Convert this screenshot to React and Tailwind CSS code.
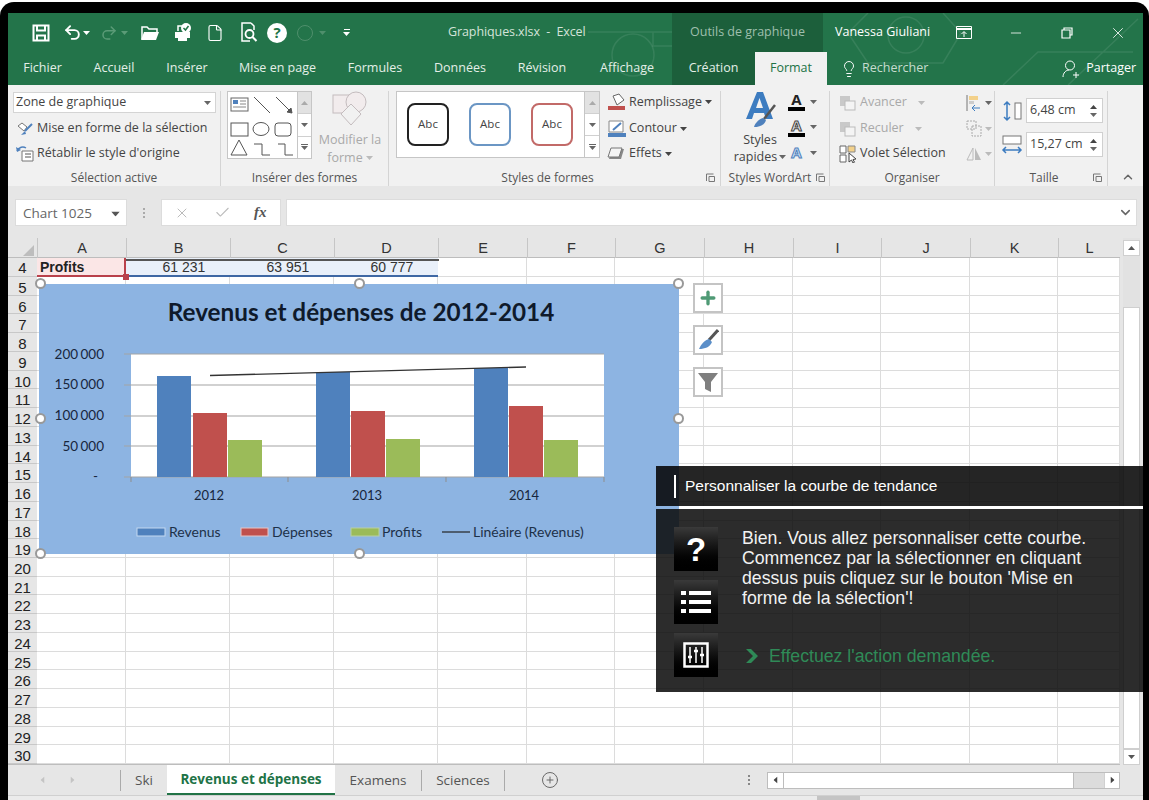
import React from "react";
import {
  Redo2,
  Undo2,
  File,
  Lightbulb,
  ChevronUp,
  ChevronDown,
  Minus,
  X,
  Check,
  CirclePlus,
  Plus,
} from "lucide-react";

const tabs = [
  ["Fichier", "w-[69px]"],
  ["Accueil", "w-[74px]"],
  ["Insérer", "w-[72px]"],
  ["Mise en page", "w-[109px]"],
  ["Formules", "w-[86px]"],
  ["Données", "w-[84px]"],
  ["Révision", "w-[80px]"],
  ["Affichage", "w-[90px]"],
];

const columns = ["A", "B", "C", "D", "E", "F", "G", "H", "I", "J", "K", "L"];
const rows = Array.from({ length: 26 }, (_, i) => i + 5);
const gridCols =
  "grid grid-cols-[29px_89px_104px_104px_104px_89px_88px_89px_89px_88px_89px_88px_62px]";

const Caret = ({ className = "text-[#666]" }) => (
  <svg width="7" height="4" viewBox="0 0 7 4" className={`shrink-0 ${className}`}>
    <path d="M0 0h7L3.5 4z" fill="currentColor" />
  </svg>
);

const Launcher = () => (
  <svg width="9" height="9" viewBox="0 0 9 9" className="shrink-0">
    <path d="M.5 8V1h7M3 3.5h5.5V8.500H3z" fill="none" stroke="#777" />
  </svg>
);

const Group = ({ width, label, launcher, labelClass = "", children }) => (
  <div className={`${width} flex flex-col border-r border-[#d4d4d4] h-[95px]`}>
    <div className="h-[78px] flex">{children}</div>
    <div className={`h-[17px] flex items-center text-[12px] text-[#555] ${labelClass}`}>
      <span className="flex-1 text-center">{label}</span>
      {launcher && <Launcher />}
    </div>
  </div>
);

const Handle = ({ className }) => (
  <div className={`absolute w-[11px] h-[11px] rounded-full bg-white border-2 border-[#999] ${className}`} />
);

const FloatButton = ({ children }) => (
  <div className="w-[30px] h-[30px] bg-white border-2 border-[#c4c4c4] flex items-center justify-center">
    {children}
  </div>
);

const HelpButton = ({ children }) => (
  <div className="w-[44px] h-[44px] bg-gradient-to-b from-[#3a3a3a] to-black flex items-center justify-center">
    {children}
  </div>
);

const Abc = ({ color }) => (
  <div className={`w-[42px] h-[43px] rounded-[8px] border-2 bg-white text-[11.500px] text-[#444] text-center pt-[10px] ${color}`}>
    Abc
  </div>
);

const ScrollStack = ({ height, className = "" }) => (
  <div className={`w-[15px] ${height} flex flex-col bg-white border-l border-[#c6c6c6] ${className}`}>
    <div className="flex-1 bg-[#e2e2e2] flex items-center justify-center">
      <Caret className="rotate-180 text-[#aaa]" />
    </div>
    <div className="flex-1 border-y border-[#d0d0d0] flex items-center justify-center">
      <Caret />
    </div>
    <div className="flex-1 flex flex-col items-center justify-center gap-[1px]">
      <div className="w-[7px] h-px bg-[#666]" />
      <Caret />
    </div>
  </div>
);

const Chart = () => (
  <svg viewBox="39 284 640 270" className="absolute left-[39px] top-[284px] w-[640px] h-[270px] font-['Lato',sans-serif]">
    <rect x="39" y="284" width="640" height="270" fill="#8db4e2" />
    <text x="361" y="321" textAnchor="middle" fontSize="24.300" fontWeight="700" fill="#0f1a2b">
      Revenus et dépenses de 2012-2014
    </text>
    <rect x="131" y="354" width="473" height="123" fill="#fff" />
    {[354, 385, 416, 446, 477].map((y) => (
      <line key={y} x1="124" x2="604" y1={y} y2={y} stroke="#a3a3a3" strokeWidth="1.200" />
    ))}
    {[
      [157, 376, "#4f81bd"],
      [193, 413, "#c0504d"],
      [228, 440, "#9bbb59"],
      [316, 372, "#4f81bd"],
      [351, 411, "#c0504d"],
      [386, 439, "#9bbb59"],
      [474, 368, "#4f81bd"],
      [509, 406, "#c0504d"],
      [544, 440, "#9bbb59"],
    ].map(([x, y, fill]) => (
      <rect key={x} x={x} y={y} width="34" height={477 - y} fill={fill} />
    ))}
    <line x1="210" y1="375.500" x2="526" y2="367" stroke="#333" strokeWidth="1.300" />
    {[131, 288, 446, 604].map((x) => (
      <line key={x} x1={x} x2={x} y1="477" y2="482" stroke="#8d8d8d" />
    ))}
    <g fontSize="13.500" fill="#17263c" textAnchor="end" wordSpacing="-1">
      <text x="104" y="359">200 000</text>
      <text x="104" y="389">150 000</text>
      <text x="104" y="420">100 000</text>
      <text x="104" y="451">50 000</text>
      <text x="98" y="481">-</text>
    </g>
    <g fontSize="13" fill="#17263c" textAnchor="middle">
      <text x="209" y="500">2012</text>
      <text x="367" y="500">2013</text>
      <text x="524" y="500">2014</text>
    </g>
    <g fontSize="14" fill="#1d3149">
      <rect x="137" y="528" width="28" height="8" fill="#4f81bd" stroke="#c4d8f0" />
      <text x="169" y="537">Revenus</text>
      <rect x="241" y="528" width="27" height="8" fill="#c0504d" stroke="#e6c6c8" />
      <text x="272" y="537">Dépenses</text>
      <rect x="351" y="528" width="28" height="8" fill="#9bbb59" stroke="#b9d0a4" />
      <text x="382" y="537">Profits</text>
      <line x1="442" x2="470" y1="532" y2="532" stroke="#222" strokeWidth="1.200" />
      <text x="473" y="537">Linéaire (Revenus)</text>
    </g>
  </svg>
);

const TitleBar = () => (
  <div className="h-[39px] flex items-center text-[12.5px] text-[#d3e3d9]">
    <div className="w-[440px] h-full relative flex items-center text-white">
      <svg width="18" height="18" viewBox="0 0 18 18" className="ml-[24px]">
        <path d="M1.500 1.500h15v15h-15z" fill="none" stroke="#fff" strokeWidth="2" />
        <path d="M5 1.500v5h8v-5M5 16.500v-5h8v5" fill="none" stroke="#fff" strokeWidth="2" />
      </svg>
      <Undo2 size={19} strokeWidth={2.4} className="ml-[13px]" />
      <Caret className="ml-[1px] text-white" />
      <Redo2 size={18} strokeWidth={2} className="ml-[10px] text-[#5b9b77]" />
      <Caret className="ml-[3px] text-[#5b9b77]" />
      <svg width="20" height="18" viewBox="0 0 20 18" className="ml-[12px]">
        <path d="M2 15V3h5l2 2h8v3" fill="none" stroke="#fff" strokeWidth="1.500" />
        <path d="M1 16l3-8h15l-3 8z" fill="#fff" />
      </svg>
      <svg width="21" height="21" viewBox="0 0 21 21" className="ml-[12px]">
        <path d="M3 10h15v6h-3v3H6v-3H3z" fill="#fff" />
        <path d="M6 9V4h9v5" fill="none" stroke="#fff" strokeWidth="1.500" />
        <circle cx="14" cy="6" r="5" fill="#fff" />
        <path d="M11.500 6l2 2 3-4" fill="none" stroke="#217346" strokeWidth="1.500" />
      </svg>
      <File size={18} strokeWidth={1.500} className="ml-[13px]" />
      <svg width="20" height="21" viewBox="0 0 20 21" className="ml-[15px]">
        <path d="M12 1H3v18h8M12 1l3 3v4" fill="none" stroke="#fff" strokeWidth="1.500" />
        <circle cx="10.500" cy="12" r="4" fill="none" stroke="#fff" strokeWidth="1.800" />
        <path d="M13.500 15l4 4" stroke="#fff" strokeWidth="2" />
      </svg>
      <div className="ml-[8px] w-[20px] h-[20px] rounded-full bg-white text-[#217346] text-[15px] font-bold flex items-center justify-center">?</div>
      <div className="ml-[10px] w-[16px] h-[16px] rounded-full border border-[#4f8f6c]" />
      <Caret className="ml-[6px] text-[#4f8f6c]" />
      <div className="ml-[17px] flex flex-col items-center gap-[2px]">
        <div className="w-[6px] h-px bg-white" />
        <Caret className="text-white" />
      </div>
    </div>
    <div className="w-[224px] tracking-[-0.1px]">Graphiques.xlsx&nbsp; -&nbsp; Excel</div>
    <div className="w-[151px] h-full bg-[#1c5f3b] flex items-center pl-[18px] text-[#9fbfad]">
      Outils de graphique
    </div>
    <div className="pl-[12px] w-[133px] text-white whitespace-nowrap">Vanessa Giuliani</div>
    <svg width="16" height="13" viewBox="0 0 16 13">
      <path d="M.5.500h15v12H.5z" fill="none" stroke="#fff" />
      <path d="M1 3h14" stroke="#fff" strokeWidth="2" />
      <path d="M8 11V6M5.500 8L8 5.500 10.500 8" fill="none" stroke="#fff" />
    </svg>
    <Minus size={16} strokeWidth={1.200} className="ml-[36px] text-white" />
    <svg width="12" height="12" viewBox="0 0 12 12" className="ml-[37px]">
      <path d="M3 3V1h8v7H9M1 3h8v8H1z" fill="none" stroke="#fff" strokeWidth="1.200" />
    </svg>
    <X size={18} strokeWidth={1.100} className="ml-[36px] text-white" />
  </div>
);

const TabBar = () => (
  <div className="h-[33px] flex items-center text-[12.5px] text-[#e4efe8]">
    {tabs.map(([name, width]) => (
      <div key={name} className={`${width} text-center`}>{name}</div>
    ))}
    <div className="w-[83px] h-full bg-[#1c5f3b] flex items-center justify-center">Création</div>
    <div className="w-[72px] h-full bg-[#f1f1f1] text-[#217346] flex items-center justify-center">Format</div>
    <Lightbulb size={18} strokeWidth={1.300} className="ml-[13px] text-white" />
    <span className="ml-[4px] text-[#c7dccf]">Rechercher</span>
    <svg width="20" height="20" viewBox="0 0 20 20" className="ml-[133px]">
      <circle cx="9" cy="6.500" r="4.500" fill="none" stroke="#fff" />
      <path d="M2 18c0-4 3-7 6-7M12 16h6M15 13v6" fill="none" stroke="#fff" />
    </svg>
    <span className="ml-[5px] text-white">Partager</span>
  </div>
);

const Ribbon = () => (
  <div className="h-[102px] bg-[#f1f1f1] flex pt-[6px] text-[12.5px] text-[#444]">
    <Group width="w-[213px]" label="Sélection active">
      <div className="pl-[5px] pt-px flex flex-col">
        <div className="w-[203px] h-[21px] bg-white border border-[#d4d4d4] flex items-center justify-between pl-[2px] pr-[4px]">
          <span>Zone de graphique</span>
          <Caret />
        </div>
        <div className="mt-[3px] h-[25px] flex items-center gap-[3px] pl-[3px]">
          <svg width="18" height="17" viewBox="0 0 18 17">
            <path d="M6 3l5 4-3 4-6-5z" fill="#fff" stroke="#777" />
            <path d="M16 4L9 11" stroke="#4f81bd" strokeWidth="2" />
            <path d="M9 11l-4 4 5-1z" fill="#4f81bd" />
          </svg>
          <span>Mise en forme de la sélection</span>
        </div>
        <div className="h-[25px] flex items-center gap-[3px] pl-[3px]">
          <svg width="18" height="17" viewBox="0 0 18 17">
            <path d="M6 6h11v10H6z" fill="#fff" stroke="#777" />
            <path d="M9 9h6M9 12h6" stroke="#555" />
            <path d="M1 6c2-4 6-5 9-3" fill="none" stroke="#4f81bd" strokeWidth="1.500" />
            <path d="M0 2l1 5 4-2z" fill="#4f81bd" />
          </svg>
          <span>Rétablir le style d'origine</span>
        </div>
      </div>
    </Group>

    <Group width="w-[168px]" label="Insérer des formes">
      <div className="pl-[6px] flex">
        <div className="w-[85px] h-[68px] bg-white border border-[#c6c6c6] flex">
          <svg width="69" height="66" viewBox="0 0 69 66" className="shrink-0">
            <g fill="none" stroke="#555">
              <rect x="3" y="6" width="17" height="13" stroke="#666" fill="#fff" />
              <rect x="5" y="8" width="5" height="4" fill="#4f81bd" stroke="none" />
              <path d="M12 9h6M12 12h6M5 15h13" stroke="#888" />
              <path d="M26 5l16 16M48 5l16 16" />
              <path d="M64 21l-5-1 4-4z" fill="#555" />
              <rect x="3" y="31" width="17" height="13" />
              <ellipse cx="33" cy="37" rx="8" ry="6.500" />
              <rect x="47" y="31" width="16" height="13" rx="3" />
              <path d="M11 48l-8 15h16zM26 52h8v11h8M50 52h7v11h8" />
            </g>
          </svg>
          <ScrollStack height="h-[66px]" />
        </div>
        <div className="w-[74px] ml-[1px] flex flex-col items-center text-[#a9a9a9] leading-[18px]">
          <svg width="38" height="36" viewBox="0 0 38 36" className="mb-[4px]">
            <g fill="#f2eced" stroke="#c4bcbe">
              <rect x="2" y="4" width="19" height="18" />
              <circle cx="25" cy="11" r="10" />
              <path d="M20 13l10 10-10 11-10-11z" fill="#f1f1f1" />
            </g>
          </svg>
          <span>Modifier la</span>
          <span className="flex items-center gap-[3px]">forme <Caret className="text-[#bbb]" /></span>
        </div>
      </div>
    </Group>

    <Group width="w-[332px]" label="Styles de formes" launcher labelClass="pr-[5px]">
      <div className="pl-[7px] flex">
        <div className="w-[204px] h-[67px] bg-white border border-[#c6c6c6] flex">
          <div className="flex-1 flex gap-[20px] pl-[10px] pt-[11px]">
            <Abc color="border-[#222]" />
            <Abc color="border-[#6b96c4]" />
            <Abc color="border-[#c26a68]" />
          </div>
          <ScrollStack height="h-[65px]" />
        </div>
        <div className="ml-[7px] flex flex-col text-[#444]">
          <div className="h-[22px] flex items-center gap-[2px]">
            <svg width="20" height="18" viewBox="0 0 20 18">
              <path d="M6 3l6-2 5 6-7 5z" fill="#fff" stroke="#666" />
              <rect x="1" y="13" width="17" height="4" fill="#c0504d" />
            </svg>
            <span>Remplissage</span><Caret className="ml-[1px]" />
          </div>
          <div className="mt-[3px] h-[25px] flex items-center gap-[2px]">
            <svg width="20" height="18" viewBox="0 0 20 18">
              <path d="M2 1h14v11H2z" fill="#fff" stroke="#888" />
              <path d="M6 10l8-7" stroke="#4f81bd" strokeWidth="2" />
              <rect x="1" y="13" width="18" height="4" fill="#4f81bd" />
            </svg>
            <span>Contour</span><Caret className="ml-[1px]" />
          </div>
          <div className="h-[25px] flex items-center gap-[2px]">
            <svg width="20" height="18" viewBox="0 0 20 18">
              <path d="M5 4h12l-3 10H2z" fill="#888" />
              <path d="M4 3h11l-3 9H1z" fill="#f4f4f4" stroke="#777" />
            </svg>
            <span>Effets</span><Caret className="ml-[1px]" />
          </div>
        </div>
      </div>
    </Group>

    <Group width="w-[109px]" label="Styles WordArt" launcher labelClass="pl-[3px] pr-[4px]">
      <div className="pl-[17px] flex">
        <div className="flex flex-col items-center w-[44px] leading-[17px]">
          <svg width="36" height="38" viewBox="0 0 36 38" className="mb-[2px]">
            <path d="M15 1h6l10 27h-7l-2-6H12l-2 6H4z" fill="#3d7cc0" />
            <path d="M14 17h7l-3.500-10z" fill="#f1f1f1" />
            <path d="M33 14L22 28" stroke="#555" strokeWidth="2.500" />
            <path d="M21 27c-4 1-8 5-9 9 5 0 11-2 12-7z" fill="#4f81bd" />
          </svg>
          <span>Styles</span>
          <span className="flex items-center gap-[2px] whitespace-nowrap">rapides<Caret /></span>
        </div>
        <div className="ml-[6px] flex flex-col gap-[4.500px] font-bold">
          {[
            ["text-[#222]", "bg-black"],
            ["text-[#eee] [-webkit-text-stroke:1px_#444]", "bg-black"],
            ["text-[#cfe0f3] [-webkit-text-stroke:1px_#4f81bd]", ""],
          ].map(([color, bar], i) => (
            <div key={i} className="h-[21px] flex items-center gap-[5px]">
              <div className="w-[17px] flex flex-col items-center">
                <span className={`text-[15px] leading-[15px] ${color}`}>A</span>
                {bar && <div className={`w-[17px] h-[4px] ${bar}`} />}
              </div>
              <Caret />
            </div>
          ))}
        </div>
      </div>
    </Group>

    <Group width="w-[165px]" label="Organiser">
      <div className="pl-[9px] pt-px flex">
        <div className="w-[119px] flex flex-col">
          <div className="h-[21px] flex items-center gap-[3px] text-[#a9a9a9]">
            <svg width="17" height="16" viewBox="0 0 17 16">
              <rect x="1" y="1" width="10" height="10" fill="#c9c9c9" />
              <rect x="6" y="6" width="10" height="9" fill="#f4f4f4" stroke="#bbb" />
            </svg>
            <span className="ml-[1px]">Avancer</span><Caret className="ml-[8px] text-[#bbb]" />
          </div>
          <div className="mt-[3px] h-[25px] flex items-center gap-[3px] text-[#a9a9a9]">
            <svg width="17" height="16" viewBox="0 0 17 16">
              <rect x="1" y="1" width="10" height="10" fill="#c9c9c9" />
              <rect x="6" y="6" width="10" height="9" fill="#f4f4f4" stroke="#bbb" />
            </svg>
            <span className="ml-[1px]">Reculer</span><Caret className="ml-[8px] text-[#bbb]" />
          </div>
          <div className="h-[25px] flex items-center gap-[3px] whitespace-nowrap">
            <svg width="18" height="18" viewBox="0 0 18 18" className="shrink-0">
              <path d="M1 1h6v7H1zM1 10h6v7H1z" fill="#fff" stroke="#666" />
              <path d="M9 1h7v6H9z" fill="#f3d18a" stroke="#888" />
              <path d="M10 8v9l2.500-2 1.500 3 1.500-.8-1.500-2.700 3-.5z" fill="#fff" stroke="#444" />
            </svg>
            <span>Volet Sélection</span>
          </div>
        </div>
        <div className="flex flex-col pl-[8px]">
          <div className="h-[21px] flex items-center gap-[3px]">
            <svg width="16" height="18" viewBox="0 0 16 18">
              <path d="M1 1v16" stroke="#777" />
              <rect x="3" y="2" width="9" height="4" fill="#f3d18a" />
              <rect x="3" y="7" width="5" height="3" fill="#ccc" />
              <path d="M14 14H6m3-3l-3 3 3 3" fill="none" stroke="#3d7cc0" />
            </svg>
            <Caret />
          </div>
          <div className="mt-[3px] h-[25px] flex items-center gap-[3px]">
            <svg width="16" height="17" viewBox="0 0 16 17">
              <path d="M1 1h9v8H1zM6 6h9v10H6z" fill="none" stroke="#aaa" strokeDasharray="2 1" />
            </svg>
            <Caret className="text-[#bbb]" />
          </div>
          <div className="h-[25px] flex items-center gap-[3px]">
            <svg width="16" height="16" viewBox="0 0 16 16">
              <path d="M7 2v12H1z" fill="none" stroke="#bbb" />
              <path d="M9 2v12h6z" fill="#bbb" />
            </svg>
            <Caret className="text-[#bbb]" />
          </div>
        </div>
      </div>
    </Group>

    <Group width="w-[113px]" label="Taille" launcher labelClass="pr-[5px]">
      <div className="pl-[6px] pt-[7px] flex flex-col gap-[9px]">
        {[
          [
            "6,48 cm",
            <svg key="h" width="22" height="22" viewBox="0 0 22 22">
              <path d="M6 2v18M3 5l3-3 3 3M3 17l3 3 3-3" fill="none" stroke="#3d7cc0" strokeWidth="1.500" />
              <rect x="14" y="3" width="6" height="16" fill="#fff" stroke="#777" />
            </svg>,
          ],
          [
            "15,27 cm",
            <svg key="w" width="22" height="22" viewBox="0 0 22 22">
              <rect x="2" y="2" width="18" height="8" fill="#fff" stroke="#777" />
              <path d="M2 16h18M5 13l-3 3 3 3M17 13l3 3-3 3" fill="none" stroke="#3d7cc0" strokeWidth="1.500" />
            </svg>,
          ],
        ].map(([value, icon]) => (
          <div key={value} className="flex items-center gap-[3px]">
            {icon}
            <div className="w-[77px] h-[25px] bg-white border border-[#d0d0d0] flex items-center justify-between pl-[3px] pr-[5px]">
              <span>{value}</span>
              <div className="flex flex-col gap-[4px]">
                <Caret className="rotate-180" />
                <Caret />
              </div>
            </div>
          </div>
        ))}
      </div>
    </Group>

    <div className="flex-1 flex items-end justify-end pb-[2px] pr-[8px]">
      <ChevronUp size={14} strokeWidth={2.500} className="text-[#666]" />
    </div>
  </div>
);

const FormulaBar = () => (
  <div className="h-[28px] flex text-[13.500px] text-[#666]">
    <div className="ml-[7px] w-[112px] bg-white border border-[#dcdcdc] flex items-center justify-between pl-[7px] pr-[7px] pt-[2px]">
      <span>Chart 1025</span>
      <Caret className="text-[#555] scale-125" />
    </div>
    <div className="w-[34px] flex flex-col items-center justify-center gap-[2px]">
      <div className="w-[2px] h-[2px] bg-[#aaa]" />
      <div className="w-[2px] h-[2px] bg-[#aaa]" />
      <div className="w-[2px] h-[2px] bg-[#aaa]" />
    </div>
    <div className="w-[120px] bg-white border border-[#dcdcdc] flex items-center pl-[12px] text-[#bbb]">
      <X size={16} strokeWidth={1.500} />
      <Check size={17} strokeWidth={1.500} className="ml-[24px]" />
      <span className="ml-[23px] font-['Liberation_Serif',serif] italic font-bold text-[#555] text-[15px]">fx</span>
    </div>
    <div className="ml-[5px] w-[851px] bg-white border border-[#dcdcdc] flex items-center justify-end pr-[3px]">
      <ChevronDown size={15} strokeWidth={2.500} className="text-[#666]" />
    </div>
  </div>
);

const Sheet = () => (
  <div className="flex-1 flex font-['Liberation_Sans',sans-serif]">
    <div className="w-[1112px] border-b border-[#bdbdbd]">
      <div className={`${gridCols} h-[19px] text-[14.500px] leading-[20px] text-center text-[#333]`}>
        <div className="flex items-end justify-end pr-[3px] pb-[2px]">
          <svg width="11" height="11" viewBox="0 0 11 11">
            <path d="M11 0v11H0z" fill="#bdbdbd" />
          </svg>
        </div>
        {columns.map((c) => (
          <div key={c} className="border-l border-[#c6c6c6]">{c}</div>
        ))}
      </div>
      <div className={`${gridCols} auto-rows-[18.740px] bg-white text-[14px] border-t border-[#bdbdbd]`}>
        <div className="bg-[#e6e6e6] text-[#222] text-[15px] leading-[20px] text-center border-b border-[#c8c8c8]">4</div>
        <div className="bg-[#fbe6e6] border-b-2 border-r-2 border-[#b9414b] text-[#222] font-bold leading-[19px] pl-[3px]">Profits</div>
        {["61 231", "63 951", "60 777"].map((v) => (
          <div key={v} className="bg-[#e9f0fa] border-b-2 border-[#3f68a4] text-center leading-[19px] pl-[12px] text-[#333]">{v}</div>
        ))}
        {columns.slice(4).map((c) => (
          <div key={c} className="border-r border-b border-[#dcdcdc]" />
        ))}
        {rows.map((r) => (
          <React.Fragment key={r}>
            <div className="bg-[#e6e6e6] text-[#222] text-[15px] leading-[21px] text-center border-b border-[#c8c8c8]">{r}</div>
            {columns.map((c) => (
              <div key={c} className="border-r border-b border-[#dcdcdc]" />
            ))}
          </React.Fragment>
        ))}
      </div>
    </div>
    <div className="ml-[3px] w-[17px] pt-[2px] flex flex-col bg-[#e2e2e2]">
      <div className="h-[16px] bg-white border border-[#cfcfcf] flex items-center justify-center">
        <Caret className="rotate-180 text-[#555]" />
      </div>
      <div className="h-[51px]" />
      <div className="flex-1 bg-white border border-[#cfcfcf]" />
      <div className="h-[16px] bg-white border border-[#cfcfcf] flex items-center justify-center">
        <Caret className="text-[#555]" />
      </div>
    </div>
  </div>
);

const SheetTabs = () => (
  <div className="h-[30px] flex items-center bg-[#e6e6e6] text-[13.500px] text-[#555]">
    <Caret className="rotate-90 ml-[31px] text-[#c4c4c4]" />
    <Caret className="-rotate-90 ml-[23px] text-[#c4c4c4]" />
    <div className="ml-[44px] w-px h-[21px] bg-[#aaa]" />
    <div className="w-[46px] text-center">Ski</div>
    <div className="w-[168px] h-full bg-white border-b-2 border-[#217346] text-[#217346] font-bold text-center leading-[28px]">
      Revenus et dépenses
    </div>
    <div className="w-[86px] text-center">Examens</div>
    <div className="w-px h-[21px] bg-[#aaa]" />
    <div className="w-[82px] text-center">Sciences</div>
    <div className="w-px h-[21px] bg-[#aaa]" />
    <CirclePlus size={18} strokeWidth={1.300} className="ml-[36px] text-[#666]" />
    <div className="ml-[189px] flex flex-col gap-[2px]">
      <div className="w-[2px] h-[2px] bg-[#888]" />
      <div className="w-[2px] h-[2px] bg-[#888]" />
      <div className="w-[2px] h-[2px] bg-[#888]" />
    </div>
    <div className="ml-[17px] w-[353px] h-[17px] flex border border-[#bdbdbd] bg-[#dcdcdc]">
      <div className="w-[16px] bg-white border-r border-[#bdbdbd] flex items-center justify-center">
        <Caret className="rotate-90 text-[#444]" />
      </div>
      <div className="w-[290px] bg-white border-r border-[#bdbdbd]" />
      <div className="flex-1" />
      <div className="w-[15px] bg-white border-l border-[#d0d0d0] flex items-center justify-center">
        <Caret className="-rotate-90 text-[#444]" />
      </div>
    </div>
  </div>
);

const Tutorial = () => (
  <div className="absolute left-[656px] top-[466px] w-[487px] h-[226px] font-['Liberation_Sans',sans-serif] flex flex-col">
    <div className="h-[40px] bg-[#050505]/[0.87] flex items-center pl-[18px] text-[15.500px] text-white">
      <div className="w-[2px] h-[23px] bg-white mr-[9px]" />
      Personnaliser la courbe de tendance
    </div>
    <div className="h-[3px] bg-white ml-[24px]" />
    <div className="flex-1 bg-[#090909]/[0.86] flex pl-[18px] pt-[18px]">
      <div className="flex flex-col gap-[9px]">
        <HelpButton>
          <span className="text-white text-[33px] font-bold leading-none">?</span>
        </HelpButton>
        <HelpButton>
          <svg width="30" height="24" viewBox="0 0 30 24">
            <path d="M0 1h5v4H0zM8 1h22v4H8zM0 10h5v4H0zM8 10h22v4H8zM0 19h5v4H0zM8 19h22v4H8z" fill="#fff" />
          </svg>
        </HelpButton>
        <HelpButton>
          <svg width="26" height="26" viewBox="0 0 26 26" fill="none" stroke="#fff">
            <rect x="1.500" y="1.500" width="23" height="23" strokeWidth="2.500" />
            <path d="M7 5v16M13 5v16M19 5v16" strokeWidth="1.500" />
            <path d="M5 15h4M11 9h4M17 13h4" strokeWidth="2.500" />
          </svg>
        </HelpButton>
      </div>
      <div className="ml-[24px] flex flex-col">
        <p className="text-[17.700px] leading-[20px] text-[#f2f2f2] w-[370px] mt-[1px]">
          Bien. Vous allez personnaliser cette courbe.<br />
          Commencez par la sélectionner en cliquant<br />
          dessus puis cliquez sur le bouton 'Mise en<br />
          forme de la sélection'!
        </p>
        <div className="mt-[35px] flex items-center text-[17.700px] text-[#2f8a57]">
          <svg width="14" height="14" viewBox="0 0 14 14" className="mr-[10px] ml-[3px]">
            <path d="M1 0h5l7 7-7 7H1l7-7z" fill="#2f8a57" />
          </svg>
          Effectuez l'action demandée.
        </div>
      </div>
    </div>
  </div>
);

const App = () => {
  return (
    <div className="relative w-[1149px] h-[800px] overflow-hidden bg-white font-['Open_Sans',sans-serif]">
      <div className="mt-[2px] h-[798px] rounded-t-[14px] bg-black pt-[11px] pl-[8px] pr-[6px]">
        <div className="h-[787px] flex flex-col bg-[#e6e6e6]">
          <div className="relative bg-[#23744a]">
            <svg viewBox="0 0 1135 72" className="absolute inset-0 w-full h-full pointer-events-none">
              <g fill="none" stroke="#fff" strokeOpacity="0.09" strokeWidth="1.500">
                <path d="M580 19h85M645 19v14h20" />
                <circle cx="625" cy="42" r="21" />
                <circle cx="898" cy="22" r="18" />
                <path d="M860 0l-20 20 20 30h75l18-30-18-20" />
                <path d="M995 72l35-33h95M1060 72l70-66" />
              </g>
            </svg>
            <div className="relative">
              <TitleBar />
              <TabBar />
            </div>
          </div>
          <Ribbon />
          <div className="h-[13px]" />
          <FormulaBar />
          <div className="h-[12px]" />
          <Sheet />
          <SheetTabs />
          <div className="h-[5px] bg-[#ebebeb] border-t border-[#d0d0d0] pl-[809px]">
            <div className="w-[43px] h-full bg-[#c4c4c4]" />
          </div>
        </div>
      </div>

      <div className="absolute left-[126px] top-[259px] w-[313px] border-t-2 border-[#555]" />
      <div className="absolute left-[123px] top-[274px] w-[6px] h-[6px] bg-[#b9414b]" />
      <Chart />
      <Handle className="left-[35px] top-[278px]" />
      <Handle className="left-[354px] top-[278px]" />
      <Handle className="left-[673px] top-[278px]" />
      <Handle className="left-[35px] top-[413px]" />
      <Handle className="left-[673px] top-[413px]" />
      <Handle className="left-[35px] top-[548px]" />
      <Handle className="left-[354px] top-[548px]" />

      <div className="absolute left-[693px] top-[283px] flex flex-col gap-[12px]">
        <FloatButton>
          <Plus size={20} strokeWidth={4} className="text-[#4f9a75]" />
        </FloatButton>
        <FloatButton>
          <svg width="22" height="22" viewBox="0 0 22 22">
            <path d="M21 1L12 11" stroke="#555" strokeWidth="3" />
            <path d="M12 10c-4 1-8 5-10 10 6 0 11-2 13-7z" fill="#5b8fc9" />
          </svg>
        </FloatButton>
        <FloatButton>
          <svg width="22" height="22" viewBox="0 0 22 22">
            <path d="M1 2h20l-7 9v10l-6-3v-7z" fill="#7f7f7f" />
          </svg>
        </FloatButton>
      </div>

      <Tutorial />
    </div>
  );
};

export default App;
